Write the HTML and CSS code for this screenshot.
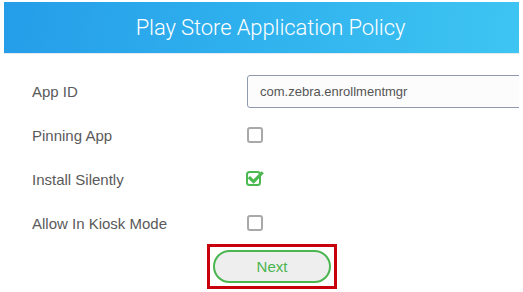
FILE: index.html
```html
<!DOCTYPE html>
<html>
<head>
<meta charset="utf-8">
<link rel="stylesheet" href="styles.css">
</head>
<body>
<div class="page">
  <div class="header"><h1 class="title">Play Store Application Policy</h1></div>
  <div class="form">
    <div class="row">
      <div class="label">App ID</div>
      <div class="control"><div class="input">com.zebra.enrollmentmgr</div></div>
    </div>
    <div class="row">
      <div class="label">Pinning App</div>
      <div class="control"><span class="box"></span></div>
    </div>
    <div class="row">
      <div class="label">Install Silently</div>
      <div class="control">
        <svg class="checked" width="20" height="18" viewBox="0 0 20 18">
          <rect x="1" y="3" width="13" height="13" rx="2.5" fill="none" stroke="#4cb850" stroke-width="2"/>
          <path d="M4 9.2 L7.6 12.6 L15.6 4.4" fill="none" stroke="#4cb850" stroke-width="3.2" stroke-linecap="square" stroke-linejoin="miter"/>
        </svg>
      </div>
    </div>
    <div class="row">
      <div class="label">Allow In Kiosk Mode</div>
      <div class="control"><span class="box"></span></div>
    </div>
    <div class="actions">
      <div class="highlight"><button class="next">Next</button></div>
    </div>
  </div>
</div>
</body>
</html>
```
FILE: styles.css
```css
html, body {
  margin: 0;
  padding: 0;
  background: #ffffff;
}
.page {
  margin: 2px 4px 0 4px;
  overflow: hidden;
  font-family: "Liberation Sans", Arial, sans-serif;
}
.header {
  height: 51px;
  background: linear-gradient(100deg, #259de9 0%, #30b2ee 50%, #3ec5f2 100%);
  border-bottom: 1px solid #e6eaee;
  display: flex;
  align-items: center;
  justify-content: center;
  padding-left: 18px;
}
.title {
  margin: 0;
  font-family: Roboto, "Liberation Sans", sans-serif;
  font-weight: 300;
  font-size: 22px;
  color: #ffffff;
  letter-spacing: -0.1px;
}
.form {
  padding-top: 15px;
}
.row {
  display: flex;
  align-items: center;
  height: 44px;
}
.label {
  flex: none;
  width: 243px;
  padding-left: 28px;
  box-sizing: border-box;
  font-size: 15px;
  color: #5a5a5a;
}
.control {
  flex: 1;
  min-width: 0;
  display: flex;
  align-items: center;
}
.input {
  width: 320px;
  flex: none;
  height: 33px;
  box-sizing: border-box;
  border: 1px solid #8e9bae;
  border-radius: 3px;
  background: #fcfcfc;
  font-size: 13px;
  color: #555555;
  padding-left: 12px;
  display: flex;
  align-items: center;
}
.box {
  width: 16px;
  height: 16px;
  box-sizing: border-box;
  border: 2px solid #a9a9a9;
  border-radius: 3px;
  background: #ffffff;
}
.checked {
  display: block;
  margin-top: -3px;
  margin-left: -1px;
}
.actions {
  display: flex;
  justify-content: center;
  padding-left: 21px;
  margin-top: -1px;
}
.highlight {
  border: 3px solid #c8000b;
  padding: 3px 3px;
}
.next {
  display: block;
  width: 118px;
  height: 33px;
  border: 2px solid #4bb54f;
  border-radius: 17px;
  background: #eeeeee;
  color: #4bb54f;
  font-family: "Liberation Sans", Arial, sans-serif;
  font-size: 15px;
  padding: 0;
}
```
